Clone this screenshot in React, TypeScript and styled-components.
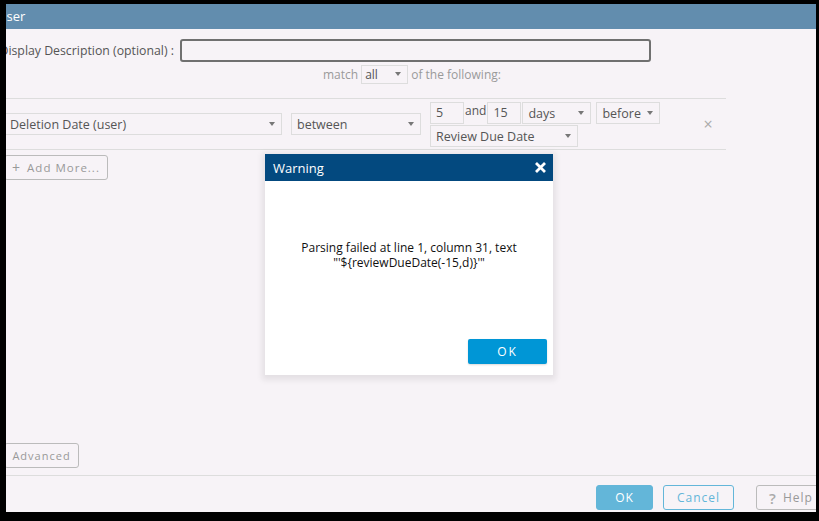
import React from "react";
import styled, { createGlobalStyle } from "styled-components";

const Global = createGlobalStyle`
  html, body { margin: 0; padding: 0; background: #000; }
  body { font-family: "Open Sans", "DejaVu Sans", sans-serif; font-size: 13px; }
  * { box-sizing: border-box; }
`;

const Screen = styled.div`
  width: 819px;
  height: 521px;
  background: #000;
  padding: 4px 0 0 6px;
  overflow: hidden;
`;

const Window = styled.div`
  position: relative;
  width: 810px;
  height: 508px;
  background: #f7f3f7;
  overflow: hidden;
  display: flex;
  flex-direction: column;
`;

const TitleBar = styled.div`
  height: 25px;
  flex: 0 0 25px;
  background: #628dae;
  color: #fff;
  font-size: 13px;
  line-height: 25px;
  margin-left: -9px;
  white-space: nowrap;
`;

const Body = styled.div`
  flex: 1;
  display: flex;
  flex-direction: column;
`;

const DescRow = styled.div`
  display: flex;
  align-items: center;
  margin-top: 10px;
  height: 23px;
`;

const Label = styled.div`
  width: 168px;
  flex: 0 0 168px;
  margin-right: 6px;
  display: flex;
  justify-content: flex-end;
  color: #555;
  font-size: 12.3px;
  white-space: nowrap;
`;

const TextBox = styled.div`
  width: 471px;
  height: 23px;
  border: 2px solid #707070;
  border-radius: 3px;
  background: #f7f3f7;
`;

const MatchRow = styled.div`
  display: flex;
  align-items: center;
  gap: 3px;
  margin-top: 3px;
  height: 18px;
  padding-left: 317px;
  color: #9a9a9a;
  font-size: 12px;
`;

const Divider = styled.div<{ $width?: number; $top?: number }>`
  height: 1px;
  background: #ddd;
  width: ${(p) => (p.$width ? `${p.$width}px` : "100%")};
  margin-top: ${(p) => p.$top ?? 0}px;
  flex: 0 0 1px;
`;

const Select = styled.div<{ $w: number; $h?: number; $fs?: number; $pad?: number }>`
  position: relative;
  flex: none;
  width: ${(p) => p.$w}px;
  height: ${(p) => p.$h ?? 22}px;
  border: 1px solid #ddd;
  background: #f7f3f7;
  color: #555;
  font-size: ${(p) => p.$fs ?? 12.5}px;
  padding-left: ${(p) => p.$pad ?? 5}px;
  display: flex;
  align-items: center;
  white-space: nowrap;
  &::after {
    content: "";
    position: absolute;
    right: 6px;
    top: 50%;
    margin-top: -2px;
    border-left: 3.5px solid transparent;
    border-right: 3.5px solid transparent;
    border-top: 4px solid #777;
  }
`;

const Criteria = styled.div`
  display: flex;
  height: 50px;
  width: 720px;
  align-items: flex-start;
`;

const MainSelects = styled.div`
  display: flex;
  gap: 9px;
  margin-top: 14px;
  margin-left: -2px;
`;

const RangeBlock = styled.div`
  display: flex;
  flex-direction: column;
  gap: 1px;
  margin-left: 9px;
  margin-top: 3px;
`;

const RangeLine = styled.div`
  display: flex;
  align-items: flex-start;
  gap: 1px;
  color: #555;
  font-size: 12px;
`;

const NumBox = styled.div`
  flex: none;
  width: 34px;
  height: 22px;
  border: 1px solid #ddd;
  background: #f7f3f7;
  padding-left: 5px;
  line-height: 20px;
  color: #555;
  font-size: 12.5px;
`;

const And = styled.span`
  line-height: 18px;
`;

const Remove = styled.div`
  margin-left: 43px;
  margin-top: 17px;
  color: #aaa;
  font-size: 16px;
  line-height: 16px;
`;

const GhostButton = styled.div<{ $w: number; $ls?: number; $fs?: number }>`
  width: ${(p) => p.$w}px;
  height: 25px;
  border: 1px solid #bbb;
  border-radius: 3px;
  color: #999;
  font-size: ${(p) => p.$fs ?? 11.5}px;
  letter-spacing: ${(p) => p.$ls ?? 0.5}px;
  display: flex;
  align-items: center;
  justify-content: center;
  gap: 6px;
  white-space: nowrap;
  margin-left: -2px;
`;

const AddRow = styled.div`
  margin-top: 5px;
`;

const Spacer = styled.div`
  flex: 1;
`;

const AdvRow = styled.div`
  margin-bottom: 7px;
`;

const Footer = styled.div`
  height: 36px;
  flex: 0 0 36px;
  display: flex;
  align-items: flex-start;
  padding-top: 9px;
  padding-left: 590px;
  gap: 10px;
`;

const FooterButton = styled.div<{ $kind: "primary" | "outline" | "plain"; $w: number }>`
  flex: 0 0 ${(p) => p.$w}px;
  height: 25px;
  border-radius: 3px;
  display: flex;
  align-items: center;
  justify-content: center;
  gap: 6px;
  font-size: 12px;
  letter-spacing: 1px;
  white-space: nowrap;
  background: ${(p) => (p.$kind === "primary" ? "#63b6d9" : "transparent")};
  color: ${(p) => (p.$kind === "primary" ? "#fff" : p.$kind === "outline" ? "#63b6d9" : "#999")};
  border: 1px solid ${(p) => (p.$kind === "plain" ? "#bbb" : "#63b6d9")};
  margin-left: ${(p) => (p.$kind === "plain" ? 12 : 0)}px;
`;

const HelpQ = styled.span`
  font-size: 15px;
  color: #aaa;
  font-weight: 600;
`;

const Modal = styled.div`
  position: absolute;
  left: 259px;
  top: 150px;
  width: 288px;
  height: 221px;
  background: #fff;
  box-shadow: 0 2px 6px 3px rgba(0, 0, 0, 0.08);
  display: flex;
  flex-direction: column;
`;

const ModalHead = styled.div`
  height: 27px;
  background: #03497f;
  color: #fff;
  display: flex;
  align-items: center;
  justify-content: space-between;
  padding: 0 6px 0 8px;
  font-size: 13px;
`;

const ModalBody = styled.div`
  flex: 1;
  display: flex;
  flex-direction: column;
  align-items: center;
  justify-content: center;
  text-align: center;
  color: #111;
  font-size: 12px;
  line-height: 15px;
  padding-bottom: 10px;
`;

const MsgLine = styled.div`
  white-space: nowrap;
  height: 15px;
`;

const ModalFoot = styled.div`
  display: flex;
  justify-content: flex-end;
  padding: 0 6px 11px 0;
`;

const ModalOk = styled.div`
  width: 79px;
  height: 25px;
  background: #0096d6;
  border-radius: 2px;
  color: #fff;
  font-size: 12px;
  letter-spacing: 2px;
  display: flex;
  align-items: center;
  justify-content: center;
  box-shadow: 0 1px 2px rgba(0,0,0,0.15);
`;

export default function App() {
  return (
    <>
      <Global />
      <Screen>
        <Window>
          <TitleBar>User</TitleBar>
          <Body>
            <DescRow>
              <Label>
                <span>Display Description (optional) :</span>
              </Label>
              <TextBox />
            </DescRow>
            <MatchRow>
              <span>match</span>
              <Select $w={47} $h={19} $fs={12} $pad={3}>all</Select>
              <span>of the following:</span>
            </MatchRow>
            <Divider $width={720} $top={15} />
            <Criteria>
              <MainSelects>
                <Select $w={278}>Deletion Date (user)</Select>
                <Select $w={130}>between</Select>
              </MainSelects>
              <RangeBlock>
                <RangeLine>
                  <NumBox>5</NumBox>
                  <And>and</And>
                  <NumBox>15</NumBox>
                  <Select $w={69}>days</Select>
                  <Select $w={64} style={{ marginLeft: 4 }}>before</Select>
                </RangeLine>
                <Select $w={148}>Review Due Date</Select>
              </RangeBlock>
              <Remove>×</Remove>
            </Criteria>
            <Divider $width={720} />
            <AddRow>
              <GhostButton $w={104} $ls={1}>
                <span style={{ fontSize: 14 }}>+</span>
                <span>Add More...</span>
              </GhostButton>
            </AddRow>
            <Spacer />
            <AdvRow>
              <GhostButton $w={75} $ls={1} $fs={11}>Advanced</GhostButton>
            </AdvRow>
          </Body>
          <Divider />
          <Footer>
            <FooterButton $kind="primary" $w={57}>OK</FooterButton>
            <FooterButton $kind="outline" $w={71}>Cancel</FooterButton>
            <FooterButton $kind="plain" $w={70}>
              <HelpQ>?</HelpQ>
              <span>Help</span>
            </FooterButton>
          </Footer>
          <Modal>
            <ModalHead>
              <span>Warning</span>
              <svg width="13" height="13" viewBox="0 0 13 13">
                <path d="M2 2 L11 11 M11 2 L2 11" stroke="#fff" strokeWidth="2.8" />
              </svg>
            </ModalHead>
            <ModalBody>
              <MsgLine>Parsing failed at line 1, column 31, text</MsgLine>
              <MsgLine>"'${"{"}reviewDueDate(-15,d){"}"}'"</MsgLine>
            </ModalBody>
            <ModalFoot>
              <ModalOk>OK</ModalOk>
            </ModalFoot>
          </Modal>
        </Window>
      </Screen>
    </>
  );
}
